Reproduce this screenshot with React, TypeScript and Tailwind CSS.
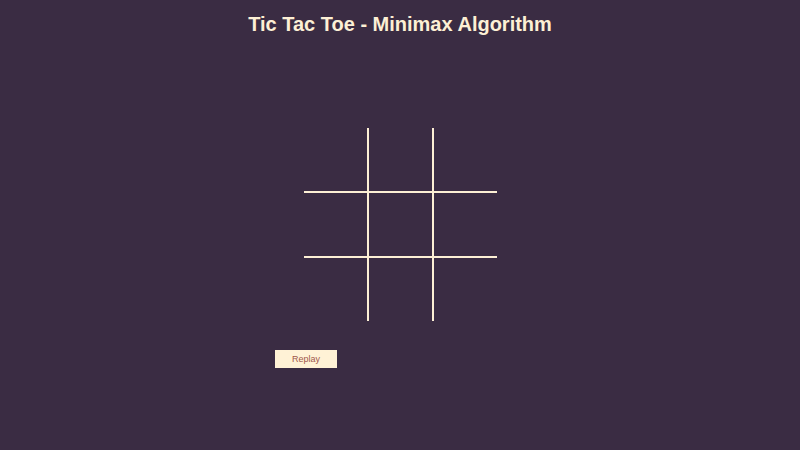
export default function App() {
  const cells = Array.from({ length: 9 });
  return (
    <div className="w-[800px] h-[450px] bg-[#3a2c43] flex flex-col items-center" style={{ fontFamily: '"Liberation Sans", Arial, sans-serif' }}>
      <h1 className="mt-[10px] text-[20px] leading-[28px] font-bold text-[#fdf0d5]">Tic Tac Toe - Minimax Algorithm</h1>
      <div className="mt-[90px] grid grid-cols-[63px_63px_63px] grid-rows-[63px_63px_63px] gap-[2px] bg-[#fdf0d5]">
        {cells.map((_, i) => (
          <div key={i} className="bg-[#3a2c43]" />
        ))}
      </div>
      <div className="w-[800px] flex mt-[29px] pl-[275px]">
        <button className="w-[62px] h-[18px] bg-[#fff2d6] text-[#a0574a] text-[9px] leading-[18px]">Replay</button>
      </div>
    </div>
  );
}
